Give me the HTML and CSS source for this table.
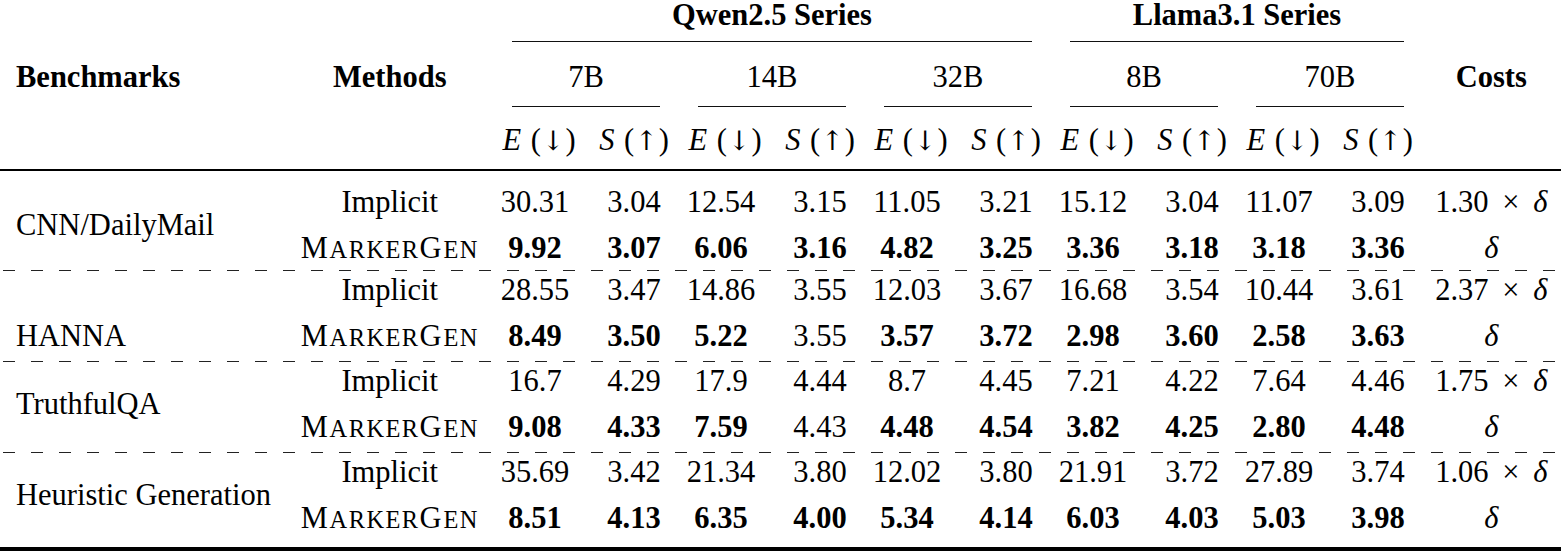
FILE: index.html
```html
<!DOCTYPE html>
<html lang="en">
<head>
<meta charset="utf-8">
<title>Results table</title>
<link rel="stylesheet" href="styles.css">
</head>
<body>
<div class="table">
  <div class="grid head">
    <div class="hlabel left b">Benchmarks</div>
    <div class="hlabel mid b col2">Methods</div>
    <div class="series qwen"><div class="cm b">Qwen2.5 Series</div></div>
    <div class="series llama"><div class="cm b">Llama3.1 Series</div></div>
    <div class="hlabel mid b costs">Costs</div>
    <div class="size s1"><div class="cm">7B</div></div>
    <div class="size s2"><div class="cm">14B</div></div>
    <div class="size s3"><div class="cm">32B</div></div>
    <div class="size s4"><div class="cm">8B</div></div>
    <div class="size s5"><div class="cm">70B</div></div>
    <div class="met e c3"><i>E</i> (<span class="arr">↓</span>)</div>
    <div class="met s c4"><i>S</i> (<span class="arr">↑</span>)</div>
    <div class="met e c5"><i>E</i> (<span class="arr">↓</span>)</div>
    <div class="met s c6"><i>S</i> (<span class="arr">↑</span>)</div>
    <div class="met e c7"><i>E</i> (<span class="arr">↓</span>)</div>
    <div class="met s c8"><i>S</i> (<span class="arr">↑</span>)</div>
    <div class="met e c9"><i>E</i> (<span class="arr">↓</span>)</div>
    <div class="met s c10"><i>S</i> (<span class="arr">↑</span>)</div>
    <div class="met e c11"><i>E</i> (<span class="arr">↓</span>)</div>
    <div class="met s c12"><i>S</i> (<span class="arr">↑</span>)</div>
  </div>
  <div class="rule-top"></div>

  <div class="grid group g1">
    <div class="bench both">CNN/DailyMail</div>
    <div class="m">Implicit</div>
    <div class="e">30.31</div><div class="s">3.04</div>
    <div class="e">12.54</div><div class="s">3.15</div>
    <div class="e">11.05</div><div class="s">3.21</div>
    <div class="e">15.12</div><div class="s">3.04</div>
    <div class="e">11.07</div><div class="s">3.09</div>
    <div class="cost">1.30<span class="op">×</span><i>δ</i></div>
    <div class="m"><span class="sc">M<small>ARKER</small>G<small>EN</small></span></div>
    <div class="e b">9.92</div><div class="s b">3.07</div>
    <div class="e b">6.06</div><div class="s b">3.16</div>
    <div class="e b">4.82</div><div class="s b">3.25</div>
    <div class="e b">3.36</div><div class="s b">3.18</div>
    <div class="e b">3.18</div><div class="s b">3.36</div>
    <div class="cost"><i>δ</i></div>
  </div>
  <div class="dash"></div>

  <div class="grid group g2">
    <div class="bench second">HANNA</div>
    <div class="m">Implicit</div>
    <div class="e">28.55</div><div class="s">3.47</div>
    <div class="e">14.86</div><div class="s">3.55</div>
    <div class="e">12.03</div><div class="s">3.67</div>
    <div class="e">16.68</div><div class="s">3.54</div>
    <div class="e">10.44</div><div class="s">3.61</div>
    <div class="cost">2.37<span class="op">×</span><i>δ</i></div>
    <div class="m"><span class="sc">M<small>ARKER</small>G<small>EN</small></span></div>
    <div class="e b">8.49</div><div class="s b">3.50</div>
    <div class="e b">5.22</div><div class="s">3.55</div>
    <div class="e b">3.57</div><div class="s b">3.72</div>
    <div class="e b">2.98</div><div class="s b">3.60</div>
    <div class="e b">2.58</div><div class="s b">3.63</div>
    <div class="cost"><i>δ</i></div>
  </div>
  <div class="dash"></div>

  <div class="grid group g3">
    <div class="bench both">TruthfulQA</div>
    <div class="m">Implicit</div>
    <div class="e">16.7</div><div class="s">4.29</div>
    <div class="e">17.9</div><div class="s">4.44</div>
    <div class="e">8.7</div><div class="s">4.45</div>
    <div class="e">7.21</div><div class="s">4.22</div>
    <div class="e">7.64</div><div class="s">4.46</div>
    <div class="cost">1.75<span class="op">×</span><i>δ</i></div>
    <div class="m"><span class="sc">M<small>ARKER</small>G<small>EN</small></span></div>
    <div class="e b">9.08</div><div class="s b">4.33</div>
    <div class="e b">7.59</div><div class="s">4.43</div>
    <div class="e b">4.48</div><div class="s b">4.54</div>
    <div class="e b">3.82</div><div class="s b">4.25</div>
    <div class="e b">2.80</div><div class="s b">4.48</div>
    <div class="cost"><i>δ</i></div>
  </div>
  <div class="dash"></div>

  <div class="grid group g4">
    <div class="bench both">Heuristic Generation</div>
    <div class="m">Implicit</div>
    <div class="e">35.69</div><div class="s">3.42</div>
    <div class="e">21.34</div><div class="s">3.80</div>
    <div class="e">12.02</div><div class="s">3.80</div>
    <div class="e">21.91</div><div class="s">3.72</div>
    <div class="e">27.89</div><div class="s">3.74</div>
    <div class="cost">1.06<span class="op">×</span><i>δ</i></div>
    <div class="m"><span class="sc">M<small>ARKER</small>G<small>EN</small></span></div>
    <div class="e b">8.51</div><div class="s b">4.13</div>
    <div class="e b">6.35</div><div class="s b">4.00</div>
    <div class="e b">5.34</div><div class="s b">4.14</div>
    <div class="e b">6.03</div><div class="s b">4.03</div>
    <div class="e b">5.03</div><div class="s b">3.98</div>
    <div class="cost"><i>δ</i></div>
  </div>
  <div class="rule-bottom"></div>
</div>
</body>
</html>
```

FILE: styles.css
```css
html, body {
  margin: 0;
  padding: 0;
  background: #ffffff;
}

body {
  font-family: "Liberation Serif", "DejaVu Serif", serif;
  font-size: 30.5px;
  color: #000000;
  width: 1561px;
  height: 554px;
  overflow: hidden;
}

.table {
  width: 1561px;
}

.grid {
  display: grid;
  grid-template-columns: 288px 203.5px repeat(10, 93px) 139.5px;
}

.b {
  font-weight: bold;
}

i {
  font-style: italic;
}

/* ---------- header ---------- */
.head {
  grid-template-rows: 42px 65px 62px;
  line-height: 30px;
}

.hlabel {
  grid-row: 1 / 4;
  padding-top: 62px;
}

.hlabel.left {
  grid-column: 1;
  padding-left: 16px;
}

.hlabel.mid {
  text-align: center;
}

.col2 {
  grid-column: 2;
}

.costs {
  grid-column: 13;
}

.series {
  grid-row: 1;
}

.qwen {
  grid-column: 3 / 9;
}

.llama {
  grid-column: 9 / 13;
}

.series .cm {
  height: 41px;
}

.cm {
  margin: 0 17.5px 0 20.5px;
  border-bottom: 1px solid #111;
  text-align: center;
}

.size {
  grid-row: 2;
}

.size .cm {
  height: 44px;
  padding-top: 20px;
}

.s1 { grid-column: 3 / 5; }
.s2 { grid-column: 5 / 7; }
.s3 { grid-column: 7 / 9; }
.s4 { grid-column: 9 / 11; }
.s5 { grid-column: 11 / 13; }

.met {
  grid-row: 3;
  padding-top: 18px;
  white-space: nowrap;
}

.met.e {
  padding-left: 8px;
}

.met i {
  margin-right: 2px;
}

.arr {
  font-family: "DejaVu Serif", "Liberation Serif", serif;
  font-size: 0.88em;
  margin: 0 1px;
}

.c3 { grid-column: 3; }
.c4 { grid-column: 4; }
.c5 { grid-column: 5; }
.c6 { grid-column: 6; }
.c7 { grid-column: 7; }
.c8 { grid-column: 8; }
.c9 { grid-column: 9; }
.c10 { grid-column: 10; }
.c11 { grid-column: 11; }
.c12 { grid-column: 12; }

/* ---------- rules ---------- */
.rule-top {
  height: 2px;
  background: #000;
}

.rule-bottom {
  height: 4px;
  background: #000;
}

.dash {
  height: 1px;
  background-image: repeating-linear-gradient(90deg, #222 0 12px, transparent 12px 28px);
  background-position: 3px 0;
}

/* ---------- body ---------- */
.group {
  grid-template-rows: 38px 38px;
  row-gap: 8px;
  line-height: 38px;
}

.g1 { padding: 12px 0 3px; }
.g2 { padding: 0 0 6px; }
.g3 { padding: 0 0 6px; }
.g4 { padding: 0 0 10px; }

.bench {
  grid-column: 1;
  padding-left: 16px;
  white-space: nowrap;
}

.bench.both {
  grid-row: 1 / 3;
  align-self: center;
}

.bench.second {
  grid-row: 2;
}

.m {
  grid-column: 2;
  text-align: center;
  white-space: nowrap;
}

.e {
  text-align: center;
  padding-right: 6px;
}

.s {
  text-align: center;
  padding-left: 6px;
}

.cost {
  grid-column: 13;
  text-align: center;
  white-space: nowrap;
}

.op {
  margin: 0 0.45em;
}

.sc {
  letter-spacing: 0.06em;
}

.sc small {
  font-size: 0.8em;
  letter-spacing: 0.06em;
}
```
